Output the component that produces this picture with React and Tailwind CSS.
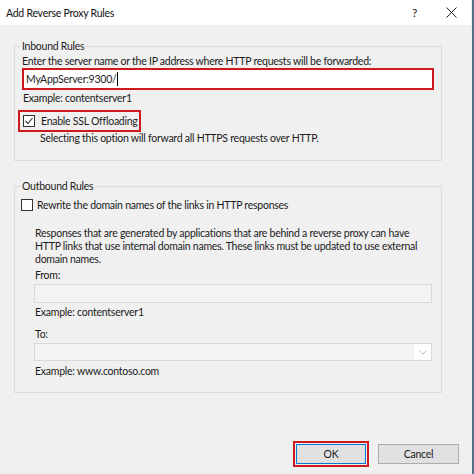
import React from "react";

const FONT = { fontFamily: "Lato, 'Noto Sans', sans-serif" };

function CheckBox({ checked }) {
  return (
    <svg width="12" height="12" viewBox="0 0 12 12" className="shrink-0">
      <rect x="0.5" y="0.5" width="11" height="11" fill="#ffffff" stroke="#333333" />
      {checked && <polyline points="2.5,6 5,8.5 9.5,3" fill="none" stroke="#333333" strokeWidth="1.1" />}
    </svg>
  );
}

export default function App() {
  return (
    <div className="w-[474px] h-[474px] bg-[#f0f0f0] flex text-[10.5px] tracking-[-0.25px] leading-[14px] text-[#1b1b1b] overflow-hidden whitespace-nowrap" style={FONT}>
      <div className="flex-1 flex flex-col">
        {/* Title bar */}
        <div className="h-[25px] bg-white flex items-center pl-[6px]">
          <span className="text-[#111]">Add Reverse Proxy Rules</span>
          <span className="ml-auto text-[12px] text-[#222]">?</span>
          <svg width="11" height="11" viewBox="0 0 11 11" className="ml-[29px] mr-[14px]">
            <path d="M0.5 0.5 L10.5 10.5 M10.5 0.5 L0.5 10.5" stroke="#222" strokeWidth="1" />
          </svg>
        </div>

        <div className="pl-[14px] flex flex-col">
          {/* Inbound */}
          <fieldset className="mt-[14px] w-[428px] border border-[#dcdcdc] pl-[5px] pb-[15px] min-w-0">
            <legend className="px-[2px]">Inbound Rules</legend>
            <div className="ml-[2px] mt-[1px]">Enter the server name or the IP address where HTTP requests will be forwarded:</div>
            <div className="ml-[2px] w-[412px] h-[22px] border-2 border-[#cc1a1f] bg-white flex items-center pl-[2px]">
              <span>MyAppServer:9300/</span>
              <span className="ml-[1px] w-px h-[14px] bg-black" />
            </div>
            <div className="ml-[3px] mt-[1px]">Example: contentserver1</div>
            <div className="mt-[5px] -ml-[2px] w-[123px] h-[22px] border-2 border-[#cc1a1f] flex items-center pl-[3px] gap-[6px]">
              <CheckBox checked />
              <span>Enable SSL Offloading</span>
            </div>
            <div className="ml-[20px] -mt-[1px]">Selecting this option will forward all HTTPS requests over HTTP.</div>
          </fieldset>

          {/* Outbound */}
          <fieldset className="mt-[18px] w-[428px] border border-[#dcdcdc] pl-[5px] pb-[14px] min-w-0">
            <legend className="px-[2px]">Outbound Rules</legend>
            <div className="mt-[5px] ml-[1px] flex items-center gap-[4px]">
              <CheckBox />
              <span>Rewrite the domain names of the links in HTTP responses</span>
            </div>
            <div className="ml-[15px] mt-[15px] leading-[13px]">
              Responses that are generated by applications that are behind a reverse proxy can have
              <br />
              HTTP links that use internal domain names. These links must be updated to use external
              <br />
              domain names.
            </div>
            <div className="ml-[15px] mt-[2px]">From:</div>
            <div className="ml-[14px] mt-[2px] w-[398px] h-[19px] border border-[#d9d9d9] bg-[#f3f3f3]" />
            <div className="ml-[15px] mt-[2px]">Example: contentserver1</div>
            <div className="ml-[15px] mt-[8px]">To:</div>
            <div className="ml-[14px] mt-[2px] w-[398px] h-[18px] border border-[#d9d9d9] bg-[#f3f3f3] flex justify-end">
              <div className="w-[17px] h-full bg-white flex items-center justify-center">
                <svg width="8" height="5" viewBox="0 0 8 5">
                  <polyline points="0.5,0.5 4,4 7.5,0.5" fill="none" stroke="#b5b5b5" strokeWidth="1" />
                </svg>
              </div>
            </div>
            <div className="ml-[15px] mt-[3px]">Example: www.contoso.com</div>
          </fieldset>

          {/* Buttons */}
          <div className="mt-[48px] pr-[12px] flex items-center justify-end gap-[9px]">
            <div className="border-2 border-[#cc1a1f] p-[1px]">
              <div className="w-[70px] h-[20px] bg-[#e1e1e1] border border-[#0078d7] flex items-center justify-center">OK</div>
            </div>
            <div className="w-[81px] h-[20px] bg-[#e1e1e1] border border-[#adadad] flex items-center justify-center">Cancel</div>
          </div>
        </div>
      </div>
      <div className="w-[3px] bg-[#52708a] border-l border-[#e8eef2]" />
    </div>
  );
}
